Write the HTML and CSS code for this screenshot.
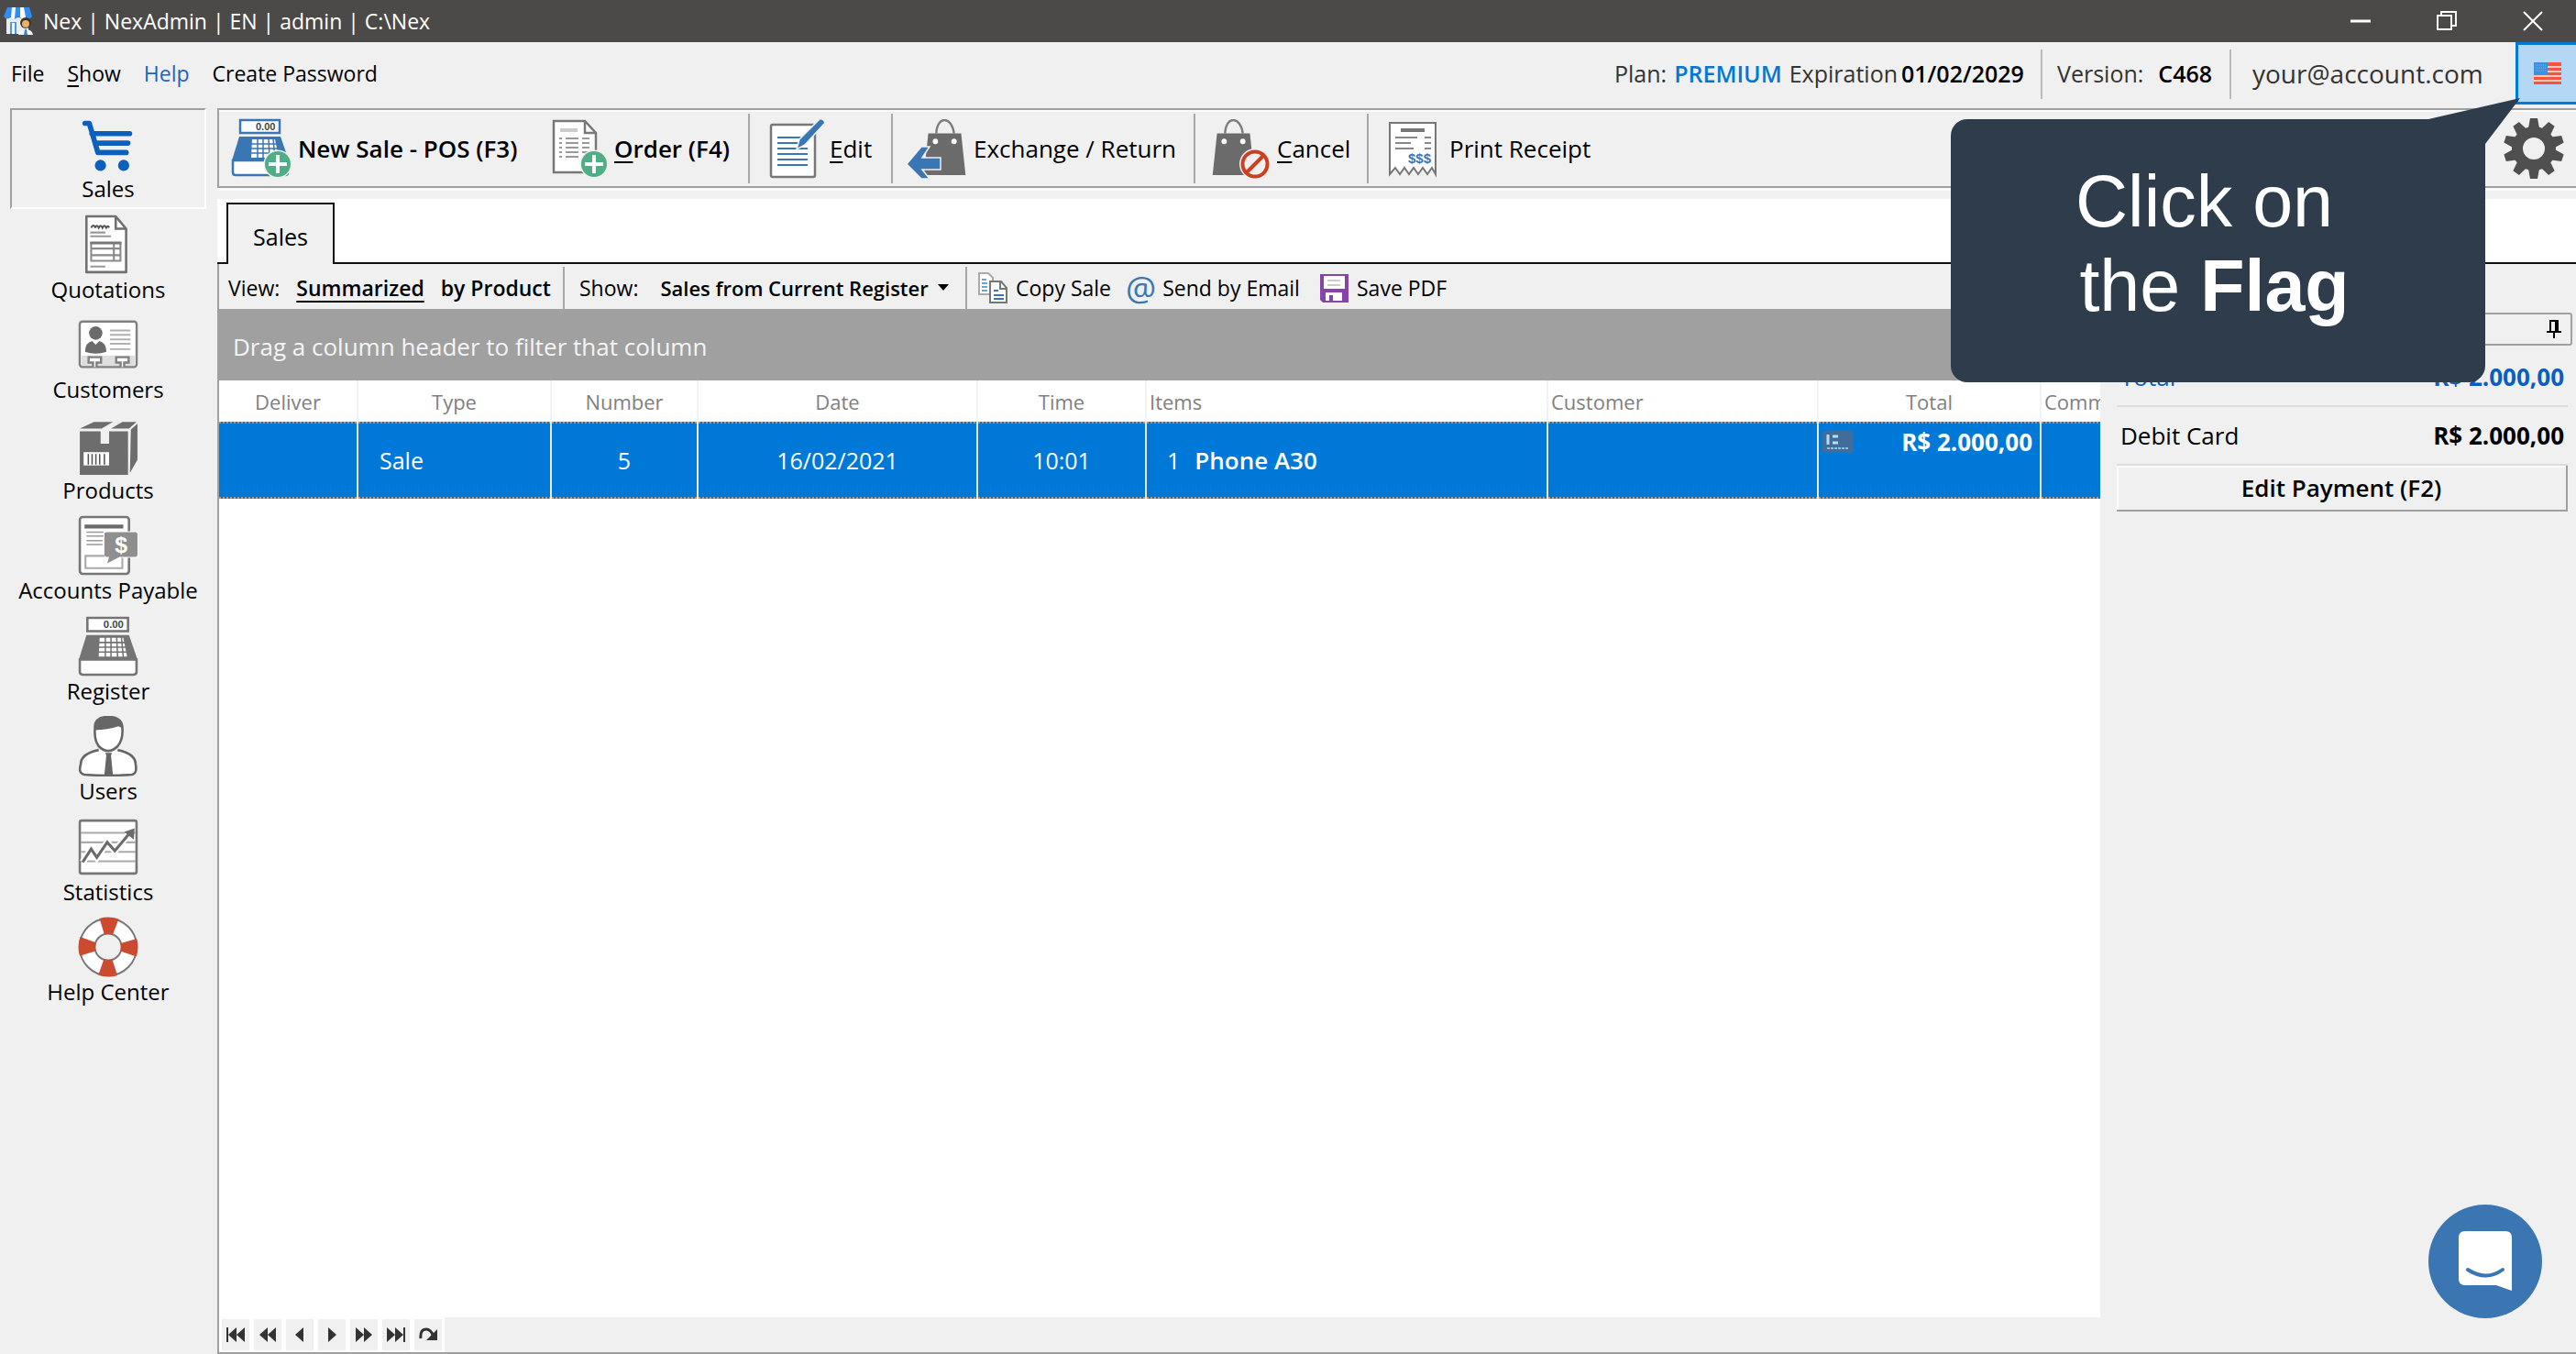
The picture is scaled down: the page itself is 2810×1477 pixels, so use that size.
FILE: index.html
```html
<!DOCTYPE html>
<html lang="en">
<head>
<meta charset="utf-8">
<title>Nex | NexAdmin | EN | admin | C:\Nex</title>
<link rel="stylesheet" href="styles.css">
</head>
<body>
<svg class="defs" aria-hidden="true">
  <symbol id="plus-badge" viewBox="0 0 28 28"><circle cx="14" cy="14" r="14" fill="#4fae86"/><path d="M14 4v20M4 14h20" stroke="#fff" stroke-width="4"/></symbol>
  <symbol id="bag-icon" viewBox="0 0 48 64"><path d="M14 16C15-4 31-4 34 16" fill="none" stroke="#7d7d7d" stroke-width="2.5"/><path d="M5 16h37l5 47H0z" fill="#6b6b6b"/><circle cx="13" cy="25" r="3" fill="#fff"/><circle cx="34" cy="25" r="3" fill="#fff"/></symbol>
</svg>

<header class="titlebar">
  <svg class="app-icon" viewBox="0 0 32 32"><path d="M3 12h24v18H3z" fill="#e8edf2"/><path d="M7 17h7v13H7z" fill="#4d9bd0"/><path d="M9 18h3v12H9z" fill="#fff"/><path d="M4 1h24l3 10q-4 5-7 0-4 5-8 0-4 5-8 0-4 5-8 0z" fill="#2f8cf2"/><path d="M9 1h4l-1 12q-2 2-4-1zM18 1h4l2 11q-3 3-6 0z" fill="#fff"/><circle cx="24" cy="18" r="6" fill="#3d3128"/><circle cx="24" cy="19" r="4" fill="#e9b269"/><path d="M16 31q1-6 8-6t8 6z" fill="#f4f6f8"/><path d="M23 25h2l1 6h-4z" fill="#3a8ad0"/></svg>
  <h1>Nex | NexAdmin | EN | admin | C:\Nex</h1>
  <div class="window-controls">
    <button type="button" aria-label="Minimize"><svg viewBox="0 0 22 22"><path d="M0 11h22" stroke-width="3"/></svg></button>
    <button type="button" aria-label="Restore"><svg viewBox="0 0 22 22"><path d="M1 5h15v15H1zM5 5V1h16v15h-5" stroke-width="2"/></svg></button>
    <button type="button" aria-label="Close"><svg viewBox="0 0 22 22"><path d="M1 1l20 20M21 1L1 21" stroke-width="2"/></svg></button>
  </div>
</header>

<div class="menubar">
  <nav class="menu">
    <button type="button">File</button>
    <button type="button"><u>S</u>how</button>
    <button type="button" class="menu-help">Help</button>
    <button type="button">Create Password</button>
  </nav>
  <div class="account">
    <p class="plan"><span>Plan:</span> <b class="premium">PREMIUM</b> <span>Expiration</span><b class="date">01/02/2029</b></p>
    <p class="version"><span>Version:</span><b>C468</b></p>
    <p class="email">your@account.com</p>
    <button type="button" class="flag" aria-label="Language">
      <svg viewBox="0 0 30 24"><path d="M0 0h30v24H0z" fill="#f4553f"/><path d="M0 5h30M0 10h30M0 15h30M0 20h30" stroke="#fbc9bd" stroke-width="2"/><path d="M0 0h15v13H0z" fill="#3f8fe0"/><path d="M2 3h11M2 6h11M2 9h11" stroke="#7db8f0" stroke-width="1" stroke-dasharray="1 1"/></svg>
    </button>
  </div>
</div>

<div class="workspace">
  <nav class="sidebar">
    <button type="button" class="side active">
      <svg viewBox="0 0 64 64" class="cart"><path d="M5 8h5l10 34h33M13 20h44M17 31h38" fill="none" stroke="#0b60bd" stroke-width="6" stroke-linecap="round" stroke-linejoin="round"/><circle cx="23" cy="57" r="6.500" fill="#0b60bd"/><circle cx="50" cy="57" r="6.500" fill="#0b60bd"/></svg>
      Sales</button>
    <button type="button" class="side">
      <svg viewBox="0 0 64 64"><path d="M9 2h31l11 13v46H9z" fill="#fff" stroke="#707070" stroke-width="2.500" stroke-linejoin="round"/><path d="M40 2v13h11" fill="none" stroke="#707070" stroke-width="2.500"/><path d="M14 14q2-4 4-1v1q2-4 4 0 2-4 4 0 2-4 4 0 2-3 3 0" fill="none" stroke="#555" stroke-width="2"/><path d="M13 19h16M13 23h22M13 55h16" stroke="#999" stroke-width="2"/><path d="M14 30h31v19H14zM14 36h31M14 43h31M38 30v19" fill="none" stroke="#8a8a8a" stroke-width="2"/><path d="M13 30h33" stroke="#777" stroke-width="3"/></svg>
      Quotations</button>
    <button type="button" class="side">
      <svg viewBox="0 0 68 64"><rect x="2" y="6" width="64" height="51" rx="3" fill="#fff" stroke="#808080" stroke-width="2.500"/><path d="M4 44h60v12H4z" fill="#dedede"/><circle cx="20" cy="19" r="7.500" fill="#6b6b6b"/><path d="M8 40q0-10 8-12l4 4 4-4q8 2 8 12-12 4-24 0z" fill="#6b6b6b"/><path d="M36 16h23M36 21h23M36 26h23M36 31h23M36 37h23" stroke="#b0b0b0" stroke-width="2"/><path d="M17 57v-5h-5v-6h14v6h-5v5M48 57v-5h-5v-6h14v6h-5v5" fill="#fff" stroke="#808080" stroke-width="2.500"/></svg>
      Customers</button>
    <button type="button" class="side">
      <svg viewBox="0 0 64 64"><path d="M2 17h22v13h9V17h20v46H2z" fill="#6d6d6d"/><path d="M2 14L17 7h20L25 14zM35 14L47 7h15l-8 7zM56 15l7-6v38l-8 14z" fill="#6d6d6d"/><path d="M6 39h27v14H6z" fill="#fff"/><path d="M11 41v11M15 41v11M19 41v11M23 41v11M28 41v11" stroke="#555" stroke-width="1.500"/></svg>
      Products</button>
    <button type="button" class="side">
      <svg viewBox="0 0 64 64"><rect x="2" y="2" width="52" height="60" rx="3" fill="#fff" stroke="#767676" stroke-width="2.500"/><path d="M7 12h41" stroke="#6b6b6b" stroke-width="4"/><path d="M9 18h18M9 22h18M9 27h17M9 31h17" stroke="#999" stroke-width="1.500"/><path d="M8 43h39v13H8z" fill="none" stroke="#aaa" stroke-width="2"/><path d="M28 17h36v28H28z" fill="#fff"/><path d="M30 18h31q2 0 2 2v22q0 2-2 2H44l-13 7 2-7h-3q-2 0-2-2V20q0-2 2-2z" fill="#8f8f8f"/><text x="39" y="40" font-family="Liberation Sans" font-weight="700" font-size="24" fill="#fff">$</text></svg>
      Accounts Payable</button>
    <button type="button" class="side"><svg viewBox="0 0 64 64">
      <g id="register-icon">
        <path d="M10 2h43v14H10z" fill="#fff" stroke="currentColor" stroke-width="2.5"/>
        <text x="27" y="13" font-family="Liberation Sans" font-weight="700" font-size="11" fill="#444">0.00</text>
        <path d="M9 20h45l9 26H1z" fill="currentColor"/>
        <path d="M2 46h60v13q0 3-3 3H5q-3 0-3-3z" fill="#fff" stroke="currentColor" stroke-width="2.5"/>
        <path d="M23 23h25l4 20H22z" fill="#fff"/>
        <path d="M22 28h28M22 33h29M22 38h30M29 22v22M35 22v22M41 22l1 22M46 22l2 22" stroke="currentColor" stroke-width="1.5"/>
      </g></svg>Register</button>
    <button type="button" class="side">
      <svg viewBox="0 0 64 64"><path d="M22 36Q3 40 3 53q-2 8 4 9h50q6-1 4-9 0-13-19-17l-10 2z" fill="#fff"/><path d="M22 36Q3 40 3 51q-3 10 4 11 25 2 50 0 6-1 4-11 0-11-19-15" fill="none" stroke="#666" stroke-width="2.500"/><path d="M18 13Q17 1 32 1t15 12q1 12-5 19-10 10-20 0-5-7-4-19z" fill="#fff" stroke="#666" stroke-width="2.500"/><path d="M18 15Q16 1 32 1t15 12l-4-2q-12 4-25 4z" fill="#666"/><path d="M29 39h7l-1 3 2 20h-9l2-20z" fill="#666"/></svg>
      Users</button>
    <button type="button" class="side">
      <svg viewBox="0 0 64 64"><rect x="2" y="4" width="60" height="56" rx="2" fill="#fff" stroke="#767676" stroke-width="2.500"/><path d="M3 17h58M3 27h58M3 37h58M3 47h58" stroke="#aaa" stroke-width="2"/><path d="M5 48l9-14 6 9 11-16 8 9 16-19" fill="none" stroke="#fff" stroke-width="7"/><path d="M5 48l9-14 6 9 11-16 8 9 16-19" fill="none" stroke="#6b6b6b" stroke-width="3"/><path d="M60 12l-1 12-10-8z" fill="#6b6b6b"/></svg>
      Statistics</button>
    <button type="button" class="side">
      <svg viewBox="0 0 68 68"><circle cx="34" cy="34" r="23.500" fill="none" stroke="#fff" stroke-width="18"/><circle cx="34" cy="34" r="32" fill="none" stroke="#777" stroke-width="2"/><circle cx="34" cy="34" r="15" fill="none" stroke="#777" stroke-width="2"/><circle cx="34" cy="34" r="24" fill="none" stroke="#cb4a30" stroke-width="19" stroke-dasharray="15.700 22" stroke-dashoffset="7.850"/></svg>
      Help Center</button>
  </nav>

  <main class="main">
    <div class="toolbar">
      <div class="tool-group sales-tools">
        <button type="button" class="tool strong new-sale"><svg class="blue" viewBox="0 0 66 66"><use href="#register-icon"/><circle cx="51" cy="50" r="15.500" fill="#f0f0f0"/><use href="#plus-badge" x="37" y="36" width="28" height="28"/></svg>New Sale - POS (F3)</button>
        <button type="button" class="tool strong"><svg viewBox="0 0 62 66"><path d="M3 3h34l12 13v43H3z" fill="#fff" stroke="#777" stroke-width="2.500"/><path d="M37 3v13h12" fill="none" stroke="#777" stroke-width="2.500"/><path d="M10 13h19" stroke="#ccc" stroke-width="4"/><path d="M9 22h3M16 22h14M34 22h8M9 27h3M16 27h14M34 27h8M9 32h3M16 32h14M34 32h8M9 37h3M16 37h14M34 37h8M9 42h3M16 42h14" stroke="#999" stroke-width="2"/><circle cx="47" cy="50" r="15.500" fill="#f0f0f0"/><use href="#plus-badge" x="33" y="36" width="28" height="28"/></svg><span><u>O</u>rder (F4)</span></button>
      </div>
      <div class="tool-group edit-tools">
        <button type="button" class="tool"><svg viewBox="0 0 62 66"><rect x="2" y="7" width="48" height="57" rx="2" fill="#fff" stroke="#777" stroke-width="2.500"/><path d="M9 21h33M9 27h28M9 33h33M9 39h33M9 45h33M9 51h33" stroke="#3b76b4" stroke-width="2"/><path d="M30 34l3-11L55 1q4-1 6 4L39 29z" fill="#3b76b4" stroke="#f0f0f0" stroke-width="1.500"/></svg><span><u>E</u>dit</span></button>
      </div>
      <div class="tool-group exchange-tools">
        <button type="button" class="tool"><svg viewBox="0 0 66 66"><use href="#bag-icon" x="18" y="1" width="48" height="62"/><path d="M0 50l16-19h9l-8 12h20v13H17l8 10h-9z" fill="#3b76b4" stroke="#f0f0f0" stroke-width="1.500"/></svg>Exchange / Return</button>
      </div>
      <div class="tool-group cancel-tools">
        <button type="button" class="tool"><svg viewBox="0 0 64 66"><use href="#bag-icon" x="0" y="1" width="48" height="62"/><circle cx="47" cy="50" r="17" fill="#f0f0f0"/><circle cx="47" cy="50" r="13.500" fill="#f0f0f0" stroke="#cd3f21" stroke-width="4"/><path d="M37 60l20-20" stroke="#cd3f21" stroke-width="4"/></svg><span><u>C</u>ancel</span></button>
      </div>
      <div class="tool-group print-tools">
        <button type="button" class="tool"><svg viewBox="0 0 54 66"><path d="M2 5h50v56l-4-7-5 7-5-7-5 7-5-7-5 7-5-7-5 7-5-7-6 7z" fill="#fff" stroke="#777" stroke-width="2"/><path d="M14 13h26" stroke="#777" stroke-width="4"/><path d="M8 21h24M40 21h7M8 27h17M40 27h7M8 33h20M40 33h7" stroke="#888" stroke-width="2"/><text x="22" y="49" font-family="Liberation Sans" font-weight="700" font-size="15" fill="#3b76b4">$$$</text></svg>Print Receipt</button>
      </div>
      <button type="button" class="settings" aria-label="Settings"><svg viewBox="-34 -34 68 68"><circle r="18" fill="none" stroke="#4f4f4f" stroke-width="12"/><g fill="#4f4f4f"><path id="tooth" d="M-6-22l2-11h8l2 11z"/><use href="#tooth" transform="rotate(36)"/><use href="#tooth" transform="rotate(72)"/><use href="#tooth" transform="rotate(108)"/><use href="#tooth" transform="rotate(144)"/><use href="#tooth" transform="rotate(180)"/><use href="#tooth" transform="rotate(216)"/><use href="#tooth" transform="rotate(252)"/><use href="#tooth" transform="rotate(288)"/><use href="#tooth" transform="rotate(324)"/></g></svg></button>
    </div>

    <div class="tabs"><button type="button" class="tab">Sales</button></div>

    <div class="content">
      <section class="grid-area">
        <div class="viewbar">
          <div class="view-group view-mode"><span>View:</span><button type="button" class="strong current">Summarized</button><button type="button" class="strong">by Product</button></div>
          <div class="view-group view-show"><label for="range">Show:</label>
            <span class="select"><select id="range" class="strong"><option>Sales from Current Register</option></select><svg viewBox="0 0 12 8"><path d="M0 0h12L6 7z"/></svg></span></div>
          <div class="view-group view-actions">
            <button type="button" class="copy"><svg viewBox="0 0 34 34"><path d="M2 1h10l5 5v18H2z" fill="#fff" stroke="#aaa" stroke-width="2"/><path d="M5 8h5M5 12h6M5 16h6M5 20h6" stroke="#6fa3d6" stroke-width="2"/><path d="M14 10h12l6 7v16H14z" fill="#fff" stroke="#777" stroke-width="2"/><path d="M25 10v8h7" fill="none" stroke="#777" stroke-width="2"/><path d="M18 20h5M18 25h11M18 29h11" stroke="#3b76b4" stroke-width="2"/></svg>Copy Sale</button>
            <button type="button" class="send"><span class="at" aria-hidden="true">@</span>Send by Email</button>
            <button type="button"><svg viewBox="0 0 34 34"><path d="M2 2h31v31H5l-3-3z" fill="#8644a8"/><path d="M6 4h23v14H6zM8 22h18v9H8z" fill="#fff"/><path d="M10 9h14M10 14h14" stroke="#ccc" stroke-width="2"/><path d="M12 25h4v6h-4z" fill="#8644a8"/></svg>Save PDF</button>
          </div>
        </div>
        <div class="group-band">Drag a column header to filter that column</div>
        <div class="table-wrap">
          <table>
            <colgroup><col class="c-deliver"><col class="c-type"><col class="c-number"><col class="c-date"><col class="c-time"><col class="c-items"><col class="c-customer"><col class="c-total"><col></colgroup>
            <thead><tr><th>Deliver</th><th>Type</th><th>Number</th><th>Date</th><th>Time</th><th class="left">Items</th><th class="left">Customer</th><th>Total</th><th class="left">Comm</th></tr></thead>
            <tbody><tr><td></td><td class="type">Sale</td><td>5</td><td>16/02/2021</td><td>10:01</td>
              <td class="items"><span>1</span><b>Phone A30</b></td><td></td>
              <td class="total"><div><svg viewBox="0 0 34 24"><rect width="34" height="24" rx="3" fill="#416d9b"/><path d="M6 4v11M11 6h6M11 13h6" stroke="#b9dcf5" stroke-width="3"/><path d="M5 19h23" stroke="#8fbfe6" stroke-width="2" stroke-dasharray="3 1"/></svg><b>R$ 2.000,00</b></div></td><td></td></tr></tbody>
          </table>
        </div>
        <footer class="pager">
          <button type="button" aria-label="First"><svg viewBox="0 0 20 16"><path d="M0 0h2v16H0zM11 0v16L2 8zM20 0v16l-9-8z"/></svg></button>
          <button type="button" aria-label="Previous page"><svg viewBox="0 0 20 16"><path d="M10 0v16L1 8zM19 0v16l-9-8z"/></svg></button>
          <button type="button" aria-label="Previous"><svg viewBox="0 0 20 16"><path d="M14 0v16L5 8z"/></svg></button>
          <button type="button" aria-label="Next"><svg viewBox="0 0 20 16"><path d="M6 0v16l9-8z"/></svg></button>
          <button type="button" aria-label="Next page"><svg viewBox="0 0 20 16"><path d="M1 0v16l9-8zM10 0v16l9-8z"/></svg></button>
          <button type="button" aria-label="Last"><svg viewBox="0 0 20 16"><path d="M18 0h2v16h-2zM0 0v16l9-8zM9 0v16l9-8z"/></svg></button>
          <button type="button" aria-label="Refresh"><svg viewBox="0 0 20 16"><path d="M2 12Q1 2 8 2q5 0 8 8" fill="none" stroke="#333" stroke-width="3"/><path d="M20 2v12H8z"/></svg></button>
        </footer>
      </section>

      <aside class="panel">
        <div class="panel-head"><svg viewBox="0 0 16 20"><path d="M4 12V1h8v11M0 13h16M8 13v7" fill="none" stroke="#000" stroke-width="2"/><path d="M9 1h4v12H9z"/></svg></div>
        <dl>
          <div class="sum"><dt>Total</dt><dd>R$ 2.000,00</dd></div>
          <div><dt>Debit Card</dt><dd>R$ 2.000,00</dd></div>
        </dl>
        <button type="button" class="edit-payment">Edit Payment (F2)</button>
      </aside>
    </div>
  </main>
</div>

<div class="callout">
  <svg class="tail" viewBox="0 0 100 50"><path d="M0 23L100 0 62 50 0 50z"/></svg>
  <p>Click on&nbsp;<br>the <b>Flag</b></p>
</div>

<button type="button" class="chat" aria-label="Chat"><svg viewBox="0 0 124 124"><circle cx="62" cy="62" r="62" fill="#3b76b3"/><path d="M40 29h44q7 0 7 7v58l-17-6H40q-7 0-7-7V36q0-7 7-7z" fill="#fff"/><path d="M43 71q20 13 38 0" fill="none" stroke="#3b76b3" stroke-width="4" stroke-linecap="round"/></svg></button>
</body>
</html>
```
FILE: styles.css
```css
* { box-sizing: border-box; }

body {
  margin: 0;
  min-height: 100vh;
  display: flex;
  flex-direction: column;
  position: relative;
  overflow-x: hidden;
  background: #f0f0f0;
  color: #000;
  font: 23px/32px "Open Sans", "Noto Sans", sans-serif;
}

button, select {
  margin: 0;
  padding: 0;
  border: 0;
  background: none;
  color: inherit;
  font: inherit;
  white-space: nowrap;
}

svg { display: block; flex: none; }
p, dl, dd, h1 { margin: 0; }
u { text-underline-offset: 4px; text-decoration-thickness: 2px; }
b, .strong { font-weight: 600; }
.defs { position: absolute; width: 0; height: 0; }

/* Title bar */
.titlebar {
  display: flex;
  align-items: center;
  height: 46px;
  padding-left: 4px;
  background: #4c4a48;
  color: #fff;
}
.app-icon { width: 32px; height: 32px; }
.titlebar h1 { margin-left: 11px; font-size: 23px; font-weight: 400; }
.window-controls { display: flex; margin-left: auto; }
.window-controls button {
  display: grid;
  place-items: center;
  width: 94px;
  height: 42px;
}
.window-controls svg { width: 22px; height: 22px; fill: none; stroke: #fff; }

/* Menu bar */
.menubar { display: flex; justify-content: space-between; height: 72px; }
.menu { display: flex; gap: 25px; padding: 0 0 4px 12px; align-items: center; }
.menu-help { color: #1e63bf; }
.account {
  display: flex;
  height: 68px;
  color: #333;
  font-size: 25px;
  white-space: nowrap;
}
.account p { display: flex; align-items: center; }
.account b { color: #000; }
.account .premium { color: #0078d7; }
.plan { gap: 8px; width: 465px; }
.plan .date { margin-left: -4px; }
.version { gap: 16px; width: 206px; }
.version, .email {
  padding-left: 18px;
  background: linear-gradient(#bbb, #bbb) 0 8px / 2px 54px no-repeat;
}
.email { padding-left: 25px; width: 312px; font-size: 28px; }
.flag {
  display: grid;
  place-items: center;
  width: 66px;
  border: 3px solid #0078d7;
  border-right: 0;
  background: #b3d7f5;
}
.flag svg { width: 30px; height: 24px; }

/* Sidebar */
.workspace { flex: 1; display: flex; }
.sidebar {
  width: 237px;
  padding: 0 12px 0 11px;
  align-self: flex-start;
  display: grid;
  grid-auto-rows: 1fr;
  min-height: 986px;
  font-size: 24px;
}
.side {
  display: flex;
  flex-direction: column;
  align-items: center;
  padding-top: 4px;
  border: 2px solid transparent;
}
.side svg { width: 66px; height: 66px; color: #747474; }
.side .cart { width: 60px; }
.side.active { border-color: #a0a0a0 #fff #fff #a0a0a0; font-weight: 500; }

/* Toolbar */
.main { flex: 1; min-width: 0; display: flex; flex-direction: column; }
.toolbar {
  display: flex;
  align-items: center;
  height: 87px;
  border: solid #a0a0a0;
  border-width: 2px 0 2px 2px;
  box-shadow: 0 3px #fafafa, inset 0 2px #fafafa;
  font-size: 26px;
}
.tool-group { display: flex; height: 76px; }
.tool-group + .tool-group { border-left: 2px solid #a8a8a8; }
.tool { display: flex; align-items: center; gap: 7px; }
.tool svg { height: 66px; }
.tool .blue { color: #3b76b4; }
.sales-tools { width: 577px; padding-left: 13px; }
.new-sale { width: 349px; }
.edit-tools { width: 156px; padding-left: 21px; }
.edit-tools .tool { gap: 4px; }
.exchange-tools { width: 330px; padding-left: 15px; }
.cancel-tools { width: 189px; padding-left: 18px; }
.print-tools { padding-left: 21px; }
.print-tools .tool { gap: 13px; }
.settings { margin-left: auto; margin-right: 12px; }
.settings svg { width: 68px; height: 68px; }

/* Tabs */
.tabs {
  display: flex;
  align-items: flex-end;
  height: 71px;
  margin-top: 12px;
  padding-left: 10px;
  background: linear-gradient(#111, #111) bottom / 100% 2px no-repeat #fff;
}
.tab {
  width: 118px;
  height: 67px;
  padding-top: 4px;
  border: 2px solid #111;
  border-bottom: 0;
  background: #f0f0f0;
  font-size: 25px;
}

/* View bar */
.content { flex: 1; display: flex; border: solid #a0a0a0; border-width: 0 0 2px 2px; }
.grid-area { flex: 1; min-width: 0; display: flex; flex-direction: column; }
.viewbar { display: flex; height: 49px; padding-top: 3px; }
.view-group { display: flex; align-items: center; }
.view-group + .view-group { border-left: 2px solid #a8a8a8; }
.view-mode { width: 375px; padding-left: 10px; gap: 18px; }
.current { text-decoration: underline 2px; text-underline-offset: 5px; }
.view-show { width: 439px; padding-left: 16px; gap: 24px; }
.select { display: flex; align-items: center; gap: 10px; }
.select select { appearance: none; font-size: 22px; }
.select svg { width: 12px; height: 8px; }
.view-actions { padding-left: 11px; }
.view-actions button { display: flex; align-items: center; gap: 8px; }
.view-actions svg { width: 34px; height: 34px; }
.copy { width: 162px; }
.view-actions .send { width: 210px; gap: 7px; }
.at { color: #3b76b4; font-size: 37px; line-height: 32px; font-weight: 500; }

/* Sales table */
.group-band {
  height: 78px;
  padding-left: 15px;
  background: #a0a0a0;
  color: #f4f4f4;
  font-size: 26px;
  line-height: 82px;
}
.table-wrap { flex: 1; overflow: hidden; background: #fff; }
table { width: 100%; table-layout: fixed; border-spacing: 0; }
.c-deliver { width: 152px; }
.c-type { width: 211px; }
.c-number { width: 160px; }
.c-date { width: 305px; }
.c-time { width: 184px; }
.c-items { width: 438px; }
.c-customer { width: 295px; }
.c-total { width: 243px; }
th {
  height: 45px;
  padding: 1px 0 0;
  border-right: 2px solid #f2f2f2;
  color: #808080;
  font-size: 22px;
  font-weight: 400;
}
.left { padding-left: 3px; text-align: left; }
td {
  height: 84px;
  padding: 0;
  border: solid #e9e9e9;
  border-width: 0 2px 0 0;
  background:
    repeating-linear-gradient(90deg, #dc8a4a 0 2px, #0078d7 2px 4px) top / 100% 2px no-repeat,
    repeating-linear-gradient(90deg, #dc8a4a 0 2px, #0078d7 2px 4px) bottom / 100% 2px no-repeat,
    #0078d7;
  color: #fff;
  font-size: 25px;
  text-align: center;
}
th:last-child, td:last-child { border-right: 0; }
.type { padding-left: 23px; text-align: left; }
.items { padding-left: 22px; text-align: left; }
.items b { margin-left: 16px; font-size: 26px; }
.total { padding: 6px 8px 0 4px; vertical-align: top; font-size: 26px; }
.total div { display: flex; align-items: center; justify-content: space-between; }
.total svg { width: 34px; height: 24px; }
.total b, dd { font-weight: 700; }

/* Record navigation */
.pager {
  display: flex;
  gap: 5px;
  height: 38px;
  padding: 2px 3px;
  background: linear-gradient(90deg, #fff 246px, #f0f0f0 246px);
}
.pager button {
  display: grid;
  place-items: center;
  width: 30px;
  background: #f0f0f0;
}
.pager svg { width: 20px; height: 16px; fill: #333; }

/* Payment panel */
.panel { width: 519px; padding: 53px 9px 0 18px; font-size: 26px; }
.panel-head {
  display: flex;
  justify-content: flex-end;
  align-items: center;
  height: 36px;
  margin-right: -5px;
  padding-right: 10px;
  border: 2px solid #a0a0a0;
  border-radius: 3px;
}
.panel-head svg { width: 16px; height: 20px; }
.panel dl { padding-top: 3px; }
.panel dl div {
  display: flex;
  align-items: center;
  justify-content: space-between;
  height: 64px;
  padding: 0 4px 0 4px;
  border-bottom: 2px solid #ddd;
}
.panel .sum { color: #0a5dc2; }
.edit-payment {
  width: 100%;
  height: 50px;
  border: solid #a0a0a0;
  border-width: 0 2px 2px 0;
  box-shadow: inset 2px 2px #fafafa;
  font-weight: 600;
}

/* Hint that lies over the window and points at the flag */
.callout {
  position: absolute;
  top: 130px;
  right: 99px;
  width: 583px;
  height: 287px;
  padding: 44px 8px 0 0;
  border-radius: 18px;
  background: #2e3c4c;
  color: #fff;
  font: 79px/92px "Liberation Sans", Arial, sans-serif;
  text-align: center;
}
.callout b { font-weight: 700; }
.tail {
  position: absolute;
  top: -23px;
  right: -38px;
  width: 100px;
  height: 50px;
  fill: #2e3c4c;
}

/* Chat launcher */
.chat {
  position: fixed;
  right: 37px;
  bottom: 39px;
  width: 124px;
  height: 124px;
}
.chat svg { width: 124px; height: 124px; }
```
